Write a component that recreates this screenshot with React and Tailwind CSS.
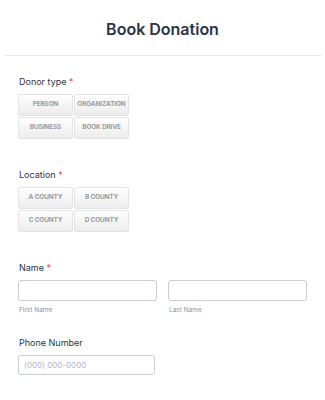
import { useState } from 'react';

const donorTypes = ['PERSON', 'ORGANIZATION', 'BUSINESS', 'BOOK DRIVE'];
const locations = ['A COUNTY', 'B COUNTY', 'C COUNTY', 'D COUNTY'];

function Label({ children, required }) {
    return (
        <p className="text-[9px] leading-[12px] text-[#2c3345] mb-[6px] pl-[1px]">
            {children}
            {required && <span className="text-[#f23a3c]"> *</span>}
        </p>
    );
}

function OptionGrid({ options, value, onChange }) {
    return (
        <div className="grid grid-cols-[55px_55px] gap-[1px] w-max">
            {options.map((opt) => (
                <button
                    key={opt}
                    type="button"
                    onClick={() => onChange(opt)}
                    className={`h-[22px] flex items-center justify-center text-[6.5px] font-bold tracking-tight text-[#9b9b9b] border border-[#e4e4e4] rounded-[2px] bg-gradient-to-b from-white to-[#ececec] ${value === opt ? 'shadow-inner' : ''}`}
                >
                    {opt}
                </button>
            ))}
        </div>
    );
}

export default function App() {
    const [donor, setDonor] = useState(null);
    const [loc, setLoc] = useState(null);

    return (
        <div className="w-[325px] h-[400px] bg-white overflow-hidden" style={{ fontFamily: 'Inter, "Noto Sans", sans-serif' }}>
            {/* Header */}
            <div className="pt-[18px] pb-[15px] mx-[4px] border-b border-[#e8e8ee]">
                <h1 className="text-center text-[16px] leading-[22px] font-semibold text-[#2c3345]">Book Donation</h1>
            </div>

            <div className="px-[18px]">
                {/* Donor type */}
                <div className="pt-[20px]">
                    <Label required>Donor type</Label>
                    <OptionGrid options={donorTypes} value={donor} onChange={setDonor} />
                </div>

                {/* Location */}
                <div className="pt-[30px]">
                    <Label required>Location</Label>
                    <OptionGrid options={locations} value={loc} onChange={setLoc} />
                </div>

                {/* Name */}
                <div className="pt-[30px]">
                    <Label required>Name</Label>
                    <div className="flex gap-[11px]">
                        <div className="w-[139px]">
                            <input type="text" className="block w-full h-[21px] border border-[#c9cbd6] rounded-[3px] outline-none" />
                            <p className="text-[6.5px] leading-[9px] text-[#8d8fa8] mt-[5px] pl-[1px]">First Name</p>
                        </div>
                        <div className="w-[139px]">
                            <input type="text" className="block w-full h-[21px] border border-[#c9cbd6] rounded-[3px] outline-none" />
                            <p className="text-[6.5px] leading-[9px] text-[#8d8fa8] mt-[5px] pl-[1px]">Last Name</p>
                        </div>
                    </div>
                </div>

                {/* Phone */}
                <div className="pt-[22px]">
                    <Label>Phone Number</Label>
                    <input
                        type="text"
                        placeholder="(000) 000-0000"
                        className="block w-[137px] h-[20px] border border-[#c9cbd6] rounded-[3px] outline-none px-[5px] text-[8px] placeholder:text-[#b3b6c6]"
                    />
                </div>
            </div>
        </div>
    );
}
